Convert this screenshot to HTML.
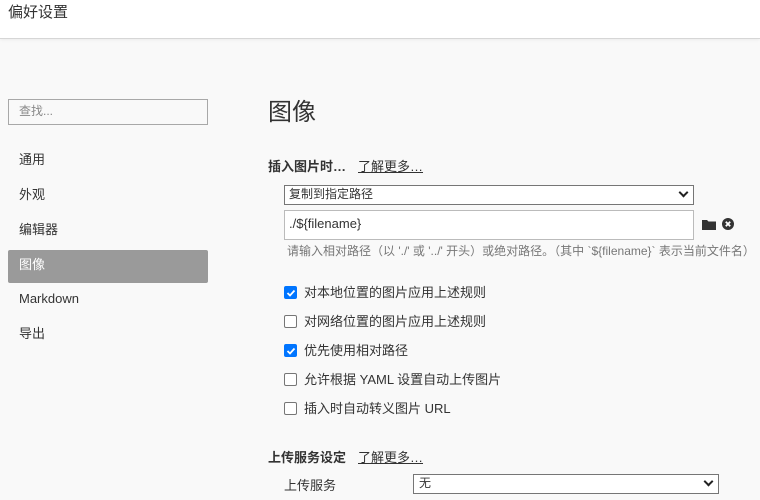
<!DOCTYPE html>
<html><head><meta charset="utf-8"><style>
*{box-sizing:border-box;margin:0;padding:0}
body{width:760px;height:500px;overflow:hidden;background:#f9f9f9;font-family:"Liberation Sans","Noto Sans CJK SC",sans-serif;color:#333;position:relative;font-size:13px}
.a{position:absolute;white-space:nowrap}
.hdr{position:absolute;left:0;top:0;width:760px;height:39px;background:#fff;border-bottom:1px solid #d6d6d6;box-shadow:0 1px 3px rgba(0,0,0,.06)}
.side{font-size:13px;color:#333}
.sel{position:absolute;left:8px;top:250px;width:200px;height:33px;background:#9a9a9a;border-radius:2px}
.box{position:absolute;background:#fff;border:1px solid #8a8a8a}
.cb{position:absolute;width:13px;height:13px;border:1px solid #767676;border-radius:2px;background:#fff}
.cb.on{background:#0075ff;border-color:#0075ff}
.chev{position:absolute;width:7px;height:7px;border-right:2px solid #222;border-bottom:2px solid #222;transform:rotate(45deg)}
u{text-decoration:underline}
</style></head><body>
<div class="hdr"></div>
<div class="a" style="left:8px;top:1px;font-size:15px;color:#333">偏好设置</div>
<div class="box" style="left:8px;top:99px;width:200px;height:26px;border-color:#a8a8a8;background:#f9f9f9"></div>
<div class="a" style="left:19px;top:102px;font-size:12px;color:#888">查找...</div>
<div class="a side" style="left:19px;top:149px">通用</div>
<div class="a side" style="left:19px;top:184px">外观</div>
<div class="a side" style="left:19px;top:219px">编辑器</div>
<div class="sel"></div>
<div class="a side" style="left:19px;top:254px;color:#fff">图像</div>
<div class="a side" style="left:19px;top:291px">Markdown</div>
<div class="a side" style="left:19px;top:323px">导出</div>

<div class="a" style="left:268px;top:92px;font-size:24px;color:#333">图像</div>
<div class="a" style="left:268px;top:156px;font-weight:bold">插入图片时…</div>
<div class="a" style="left:358px;top:156px"><u>了解更多…</u></div>
<div class="box" style="left:284px;top:185px;width:410px;height:20px;border-color:#767676"></div>
<div class="a" style="left:289px;top:185px;font-size:12px">复制到指定路径</div>
<div class="chev" style="left:680px;top:189px"></div>
<div class="box" style="left:284px;top:210px;width:410px;height:30px;border-color:#bbb"></div>
<div class="a" style="left:289px;top:216px;font-size:13px">./${filename}</div>
<svg class="a" style="left:702px;top:219px" width="14" height="11" viewBox="0 0 14 11"><path d="M0 1h5l1.5 1.5H14V11H0z" fill="#333"/></svg>
<svg class="a" style="left:722px;top:218px" width="12" height="12" viewBox="0 0 12 12"><circle cx="6" cy="6" r="6" fill="#333"/><path d="M3.8 3.8l4.4 4.4M8.2 3.8l-4.4 4.4" stroke="#fff" stroke-width="1.8"/></svg>
<div class="a" style="left:287px;top:242px;font-size:12px;color:#777">请输入相对路径（以 './' 或 '../' 开头）或绝对路径。（其中 `${filename}` 表示当前文件名）</div>

<div class="cb on" style="left:284px;top:286px"></div><svg class="a" style="left:286px;top:288px" width="10" height="10"><path d="M1.5 5l2.5 2.5 4.5-5" stroke="#fff" stroke-width="1.8" fill="none"/></svg>
<div class="a" style="left:304px;top:282px">对本地位置的图片应用上述规则</div>
<div class="cb" style="left:284px;top:315px"></div>
<div class="a" style="left:304px;top:311px">对网络位置的图片应用上述规则</div>
<div class="cb on" style="left:284px;top:344px"></div><svg class="a" style="left:286px;top:346px" width="10" height="10"><path d="M1.5 5l2.5 2.5 4.5-5" stroke="#fff" stroke-width="1.8" fill="none"/></svg>
<div class="a" style="left:304px;top:340px">优先使用相对路径</div>
<div class="cb" style="left:284px;top:373px"></div>
<div class="a" style="left:304px;top:369px">允许根据 YAML 设置自动上传图片</div>
<div class="cb" style="left:284px;top:402px"></div>
<div class="a" style="left:304px;top:398px">插入时自动转义图片 URL</div>

<div class="a" style="left:268px;top:447px;font-weight:bold">上传服务设定</div>
<div class="a" style="left:358px;top:447px"><u>了解更多…</u></div>
<div class="a" style="left:284px;top:475px">上传服务</div>
<div class="box" style="left:413px;top:474px;width:306px;height:20px;border-color:#767676"></div>
<div class="a" style="left:419px;top:474px;font-size:12px">无</div>
<div class="chev" style="left:705px;top:478px"></div>
</body></html>
